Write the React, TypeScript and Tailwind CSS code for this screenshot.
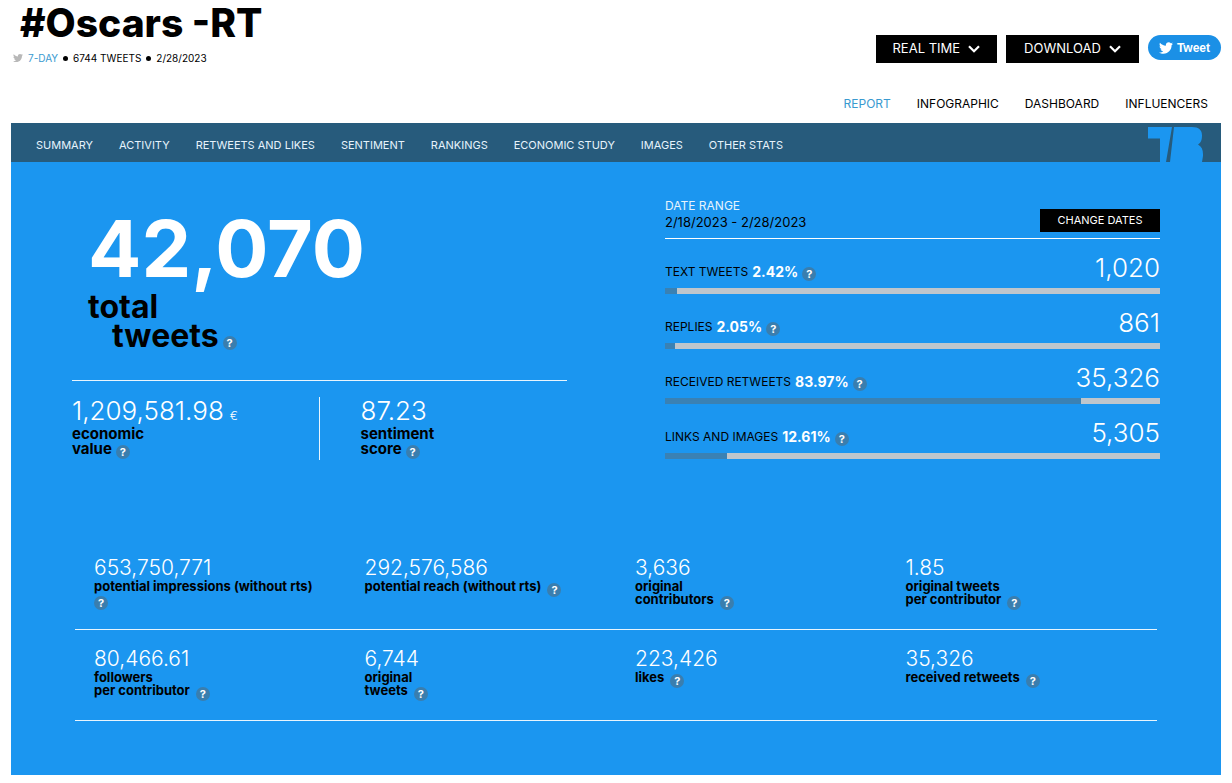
import React from 'react';
import { FaTwitter } from 'react-icons/fa';

/* ------------------------------------------------------------------ */
/*  Types                                                             */
/* ------------------------------------------------------------------ */
interface Breakdown {
  label  : string;
  percent: number;
  total  : string;
}

interface Stat {
  value: string;
  lines: string[];
  helpBelow?: boolean;
}

/* ------------------------------------------------------------------ */
/*  Data                                                              */
/* ------------------------------------------------------------------ */
const TABS = ['REPORT', 'INFOGRAPHIC', 'DASHBOARD', 'INFLUENCERS'];

const SECTIONS = [
  'SUMMARY', 'ACTIVITY', 'RETWEETS AND LIKES', 'SENTIMENT',
  'RANKINGS', 'ECONOMIC STUDY', 'IMAGES', 'OTHER STATS',
];

const BREAKDOWN: Breakdown[] = [
  { label: 'TEXT TWEETS',       percent: 2.42,  total: '1,020' },
  { label: 'REPLIES',           percent: 2.05,  total: '861' },
  { label: 'RECEIVED RETWEETS', percent: 83.97, total: '35,326' },
  { label: 'LINKS AND IMAGES',  percent: 12.61, total: '5,305' },
];

const STAT_ROWS: Stat[][] = [
  [
    { value: '653,750,771', lines: ['potential impressions (without rts)'], helpBelow: true },
    { value: '292,576,586', lines: ['potential reach (without rts)'] },
    { value: '3,636',       lines: ['original', 'contributors'] },
    { value: '1.85',        lines: ['original tweets', 'per contributor'] },
  ],
  [
    { value: '80,466.61', lines: ['followers', 'per contributor'] },
    { value: '6,744',     lines: ['original', 'tweets'] },
    { value: '223,426',   lines: ['likes'] },
    { value: '35,326',    lines: ['received retweets'] },
  ],
];

/* ------------------------------------------------------------------ */
/*  Small pieces                                                      */
/* ------------------------------------------------------------------ */
const Help: React.FC = () => (
  <button className="inline-flex h-3.5 w-3.5 shrink-0 items-center justify-center rounded-full bg-[#3a7eae] align-middle text-[11px] font-bold leading-none text-white">
    ?
  </button>
);

const Chevron: React.FC = () => (
  <svg className="h-2 w-3" viewBox="0 0 12 8" fill="none" stroke="currentColor" strokeWidth="2.2">
    <path d="M1 1.2L6 6.2L11 1.2"/>
  </svg>
);

const Logo: React.FC = () => (
  <svg className="h-9 w-14" viewBox="0 0 56 36" fill="#1b96f0">
    <path d="M0 1H24L18 36H12V12.500H0Z"/>
    <path d="M26 1H44C51 1 54 4 54 9.500C54 14 53 16.500 50 18.500C53.500 20.500 55 23.500 55 28V30L54 36H22Z"/>
  </svg>
);

const StatCell: React.FC<{ stat: Stat }> = ({ stat }) => (
  <div className="pl-[19px]">
    <p className="text-[21px] font-light leading-6 text-white">{stat.value}</p>
    <div className="text-[13px] font-bold leading-[13px]">
      {stat.lines.map((line, i) => (
        <p key={line} className="flex gap-1.5">
          {line}
          {i === stat.lines.length - 1 && !stat.helpBelow && <span className="flex h-3 pt-[3px]"><Help/></span>}
        </p>
      ))}
      {stat.helpBelow && <p className="flex h-3 pt-[3px]"><Help/></p>}
    </div>
  </div>
);

/* ------------------------------------------------------------------ */
/*  Page                                                              */
/* ------------------------------------------------------------------ */
const App: React.FC = () => (
  <div className="bg-white px-[11px] pb-2 font-[Inter,sans-serif] text-black">

    {/* ---------------- Header ---------------- */}
    <header className="flex h-24 justify-between">
      <div>
        <h1 className="pl-[9px] text-[39px] font-extrabold leading-[46px]">#Oscars -RT</h1>
        <p className="flex items-center gap-[5px] pl-0.5 pt-1 text-[10px] leading-4">
          <FaTwitter className="h-3 w-2.5 text-[#b8b8b8]"/>
          <a href="#period" className="text-[#3a9ad0]">7-DAY</a>
          <span className="h-[5px] w-[5px] rounded-full bg-black"/>
          <span>6744 TWEETS</span>
          <span className="h-[5px] w-[5px] rounded-full bg-black"/>
          <span>2/28/2023</span>
        </p>
      </div>

      <div className="flex items-start gap-[9px] pt-[35px]">
        <button className="flex h-7 items-center gap-2 bg-black px-[17px] text-[13px] text-white">REAL TIME <Chevron/></button>
        <button className="flex h-7 items-center gap-2 bg-black px-[18px] text-[13px] text-white">DOWNLOAD <Chevron/></button>
        <button className="flex h-[25px] items-center gap-1 rounded-full bg-[#1b90e6] px-[11px] font-['Liberation_Sans',sans-serif] text-xs font-bold text-white">
          <FaTwitter className="h-3.5 w-3.5"/>
          Tweet
        </button>
      </div>
    </header>

    <nav className="flex justify-end gap-[26px] pb-[11px] pr-[13px] text-xs leading-4">
      {TABS.map((tab, i) => (
        <a key={tab} href={`#${tab.toLowerCase()}`} className={i === 0 ? 'text-[#3a9ad0]' : ''}>{tab}</a>
      ))}
    </nav>

    {/* ---------------- Section bar ---------------- */}
    <div className="flex h-[39px] items-center justify-between bg-[#275b7c] pl-[25px] pr-[17px]">
      <nav className="flex gap-[26px] pt-1.5 text-[11px] text-[#e6f3fc]">
        {SECTIONS.map(section => (
          <a key={section} href={`#${section.toLowerCase().replaceAll(' ', '-')}`}>{section}</a>
        ))}
      </nav>
      <span className="self-end"><Logo/></span>
    </div>

    {/* ---------------- Summary ---------------- */}
    <main className="bg-[#1b96f0] pb-[54px] pt-9">
      <div className="grid grid-cols-2 gap-x-[98px] px-[61px]">

        {/* totals */}
        <section>
          <div className="h-[183px] border-b border-white/90 pl-4 pt-2.5">
            <p className="text-[79px] font-bold leading-[80px] text-white">42,070</p>
            <h2 className="pt-1 text-[32px] font-bold leading-[29px]">
              <span className="block">total</span>
              <span className="flex items-end gap-1 pl-6">tweets <Help/></span>
            </h2>
          </div>

          <div className="grid grid-cols-2 pt-4 text-[15px] font-bold leading-[15px]">
            <div className="h-[63px] border-r border-white/90">
              <p className="flex items-baseline gap-1.5 text-[26px] font-light leading-7 text-white">1,209,581.98 <span className="text-xs">€</span></p>
              <p className="pt-px">economic</p>
              <p className="flex gap-1">value <span className="flex h-3 pt-1"><Help/></span></p>
            </div>
            <div className="pl-[41px]">
              <p className="text-[26px] font-light leading-7 text-white">87.23</p>
              <p className="pt-px">sentiment</p>
              <p className="flex gap-1">score <span className="flex h-3 pt-1"><Help/></span></p>
            </div>
          </div>
        </section>

        {/* breakdown by tweet type */}
        <section>
          <div className="flex h-[41px] items-start justify-between border-b border-white">
            <div className="text-[13px] leading-4">
              <h3 className="text-xs leading-4 text-[#e6f3fc]">DATE RANGE</h3>
              <p>2/18/2023 - 2/28/2023</p>
            </div>
            <button className="mt-[11px] h-[23px] w-[120px] bg-black text-[11px] text-white">CHANGE DATES</button>
          </div>

          {BREAKDOWN.map(row => (
            <div key={row.label} className="h-[55px] pt-[13px]">
              <div className="flex items-center justify-between">
                <p className="flex items-center gap-1 pt-2 text-xs leading-4">
                  {row.label}
                  <span className="text-sm font-bold leading-4 text-white">{row.percent}%</span>
                  <span className="flex pt-1"><Help/></span>
                </p>
                <p className="text-[26px] font-light leading-8 text-white">{row.total}</p>
              </div>
              <div className="mt-1 h-1.5 bg-[#bfc6cc]">
                <div className="h-full bg-[#3a81b3]" style={{ width: `${row.percent}%` }}/>
              </div>
            </div>
          ))}
        </section>
      </div>

      {/* ---------------- Detailed stats ---------------- */}
      <section className="px-16 pt-[79px]">
        {STAT_ROWS.map((row, i) => (
          <div key={i} className="grid h-[91px] grid-cols-4 border-b border-white/90 pt-[17px]">
            {row.map(stat => <StatCell key={stat.lines[0]} stat={stat}/>)}
          </div>
        ))}
      </section>
    </main>
  </div>
);

export default App;
